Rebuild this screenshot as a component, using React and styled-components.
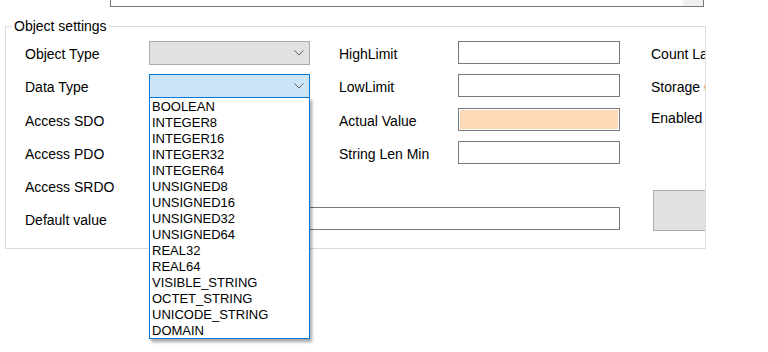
import { createGlobalStyle, styled } from "styled-components";

const GlobalStyle = createGlobalStyle`
  html, body {
    margin: 0;
    padding: 0;
    background: #ffffff;
  }
  body {
    font-family: "Liberation Sans", Arial, sans-serif;
    font-size: 14px;
    color: #000;
  }
`;

const dataTypes = [
  "BOOLEAN",
  "INTEGER8",
  "INTEGER16",
  "INTEGER32",
  "INTEGER64",
  "UNSIGNED8",
  "UNSIGNED16",
  "UNSIGNED32",
  "UNSIGNED64",
  "REAL32",
  "REAL64",
  "VISIBLE_STRING",
  "OCTET_STRING",
  "UNICODE_STRING",
  "DOMAIN",
];

function Chevron() {
  return (
    <svg width="10" height="6" viewBox="0 0 10 6">
      <polyline points="0.5,0.5 5,5 9.5,0.5" fill="none" stroke="#5f5f5f" strokeWidth="1" />
    </svg>
  );
}

function App() {
  return (
    <>
      <GlobalStyle />
      <Window>
        <TopBox>
          <ScrollStub />
        </TopBox>
        <Group>
          <Legend>Object settings</Legend>
          <Grid>
            <Label>Object Type</Label>
            <Combo $disabled>
              <Chevron />
            </Combo>
            <Label $col={4}>HighLimit</Label>
            <TextBox />
            <EdgeLabel>Count Label</EdgeLabel>

            <Label>Data Type</Label>
            <ComboCell>
              <Combo $focused>
                <Chevron />
              </Combo>
              <DropList>
                {dataTypes.map((t) => (
                  <DropItem key={t}>{t}</DropItem>
                ))}
              </DropList>
            </ComboCell>
            <Label $col={4}>LowLimit</Label>
            <TextBox />
            <EdgeLabel>Storage Group</EdgeLabel>

            <Label>Access SDO</Label>
            <Label $col={4}>Actual Value</Label>
            <TextBox $highlight />
            <EdgeLabel $shift={-3}>Enabled</EdgeLabel>

            <Label>Access PDO</Label>
            <Label $col={4}>String Len Min</Label>
            <TextBox />

            <Label>Access SRDO</Label>
            <ActionButton />

            <Label>Default value</Label>
            <WideTextBox />
          </Grid>
        </Group>
      </Window>
    </>
  );
}

const Window = styled.div`
  position: relative;
  width: 706px;
  height: 352px;
  overflow: hidden;
`;

const TopBox = styled.div`
  box-sizing: border-box;
  margin-left: 110px;
  width: 594px;
  height: 7px;
  border: 1px solid #7a7a7a;
  border-top: none;
  display: flex;
  justify-content: flex-end;
`;

const ScrollStub = styled.div`
  width: 20px;
  height: 6px;
  background: #f0f0f0;
`;

const Group = styled.fieldset`
  box-sizing: border-box;
  margin: 11px 0 0 5px;
  padding: 0;
  width: 701px;
  height: 231px;
  border: 1px solid #dcdcdc;
  min-width: 0;
`;

const Legend = styled.legend`
  margin-left: 6px;
  padding: 0 2px;
  font-size: 14px;
  line-height: 17px;
`;

const Grid = styled.div`
  display: grid;
  grid-template-columns: 124px 161px 29px 119px 162px 31px 54px;
  grid-template-rows: 33px 34px 33px 33px 33px 33px;
  padding: 6px 0 0 19px;
`;

const Label = styled.div`
  grid-column: ${(p) => p.$col || 1};
  align-self: start;
  height: 23px;
  line-height: 23px;
  padding-top: 2px;
  margin-top: ${(p) => p.$shift || 0}px;
  white-space: nowrap;
  font-size: 14px;
`;

const EdgeLabel = styled(Label)`
  grid-column: 7;
  overflow: hidden;
`;

const ComboCell = styled.div`
  position: relative;
  grid-column: 2;
  align-self: start;
`;

const Combo = styled.div`
  grid-column: 2;
  align-self: start;
  box-sizing: border-box;
  width: 161px;
  height: 24px;
  display: flex;
  align-items: center;
  justify-content: flex-end;
  padding-right: 5px;
  background: ${(p) => (p.$focused ? "#cce4f7" : "#e1e1e1")};
  border: 1px solid ${(p) => (p.$focused ? "#0078d7" : "#adadad")};
`;

const DropList = styled.ul`
  position: absolute;
  left: 0;
  top: 23px;
  z-index: 5;
  box-sizing: border-box;
  width: 161px;
  margin: 0;
  padding: 0;
  list-style: none;
  background: #fff;
  border: 1px solid #0078d7;
  box-shadow: 2px 3px 3px rgba(0, 0, 0, 0.35);
`;

const DropItem = styled.li`
  height: 16px;
  line-height: 17px;
  padding-left: 2px;
  font-size: 13px;
  white-space: nowrap;
`;

const TextBox = styled.div`
  grid-column: 5;
  align-self: start;
  box-sizing: border-box;
  width: 162px;
  height: 23px;
  border: 1px solid #7a7a7a;
  background: #fff;
  ${(p) =>
    p.$highlight &&
    `
    background: #ffdab9;
    box-shadow: inset 0 0 0 1px #fff;
  `}
`;

const WideTextBox = styled.div`
  grid-column: 2 / 6;
  align-self: start;
  box-sizing: border-box;
  height: 23px;
  border: 1px solid #7a7a7a;
  background: #fff;
`;

const ActionButton = styled.div`
  grid-column: 7;
  grid-row: 5 / 7;
  align-self: start;
  box-sizing: border-box;
  margin: 16px 0 0 2px;
  width: 52px;
  height: 41px;
  background: #e1e1e1;
  border: 1px solid #adadad;
  border-right: none;
`;

export default App;
